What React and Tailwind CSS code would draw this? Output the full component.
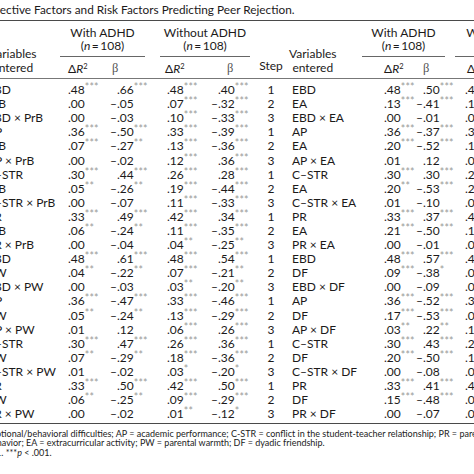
import React from "react";

const left = [
  ["1", "EBD", ".48***", ".66***", ".48***", ".40***"],
  ["2", "PrB", ".00", "–.05", ".07***", "–.32***"],
  ["3", "EBD × PrB", ".00", "–.03", ".10***", "–.33***"],
  ["1", "AP", ".36***", "–.50***", ".33***", "–.39***"],
  ["2", "PrB", ".07***", "–.27**", ".13***", "–.36***"],
  ["3", "AP × PrB", ".00", "–.02", ".12***", ".36***"],
  ["1", "C–STR", ".30***", ".44***", ".26***", ".28***"],
  ["2", "PrB", ".05**", "–.26**", ".19***", "–.44***"],
  ["3", "C–STR × PrB", ".00", "–.07", ".11***", "–.33***"],
  ["1", "PR", ".33***", ".49***", ".42***", ".34***"],
  ["2", "PrB", ".06**", "–.24**", ".11***", "–.35***"],
  ["3", "PR × PrB", ".00", "–.04", ".04**", "–.25**"],
  ["1", "EBD", ".48***", ".61***", ".48***", ".54***"],
  ["2", "PW", ".04**", "–.22**", ".07***", "–.21**"],
  ["3", "EBD × PW", ".00", "–.03", ".03**", "–.20**"],
  ["1", "AP", ".36***", "–.47***", ".33***", "–.46***"],
  ["2", "PW", ".05**", "–.24**", ".13***", "–.29***"],
  ["3", "AP × PW", ".01", ".12", ".06***", ".26***"],
  ["1", "C–STR", ".30***", ".47***", ".26***", ".36***"],
  ["2", "PW", ".07**", "–.29**", ".18***", "–.36***"],
  ["3", "C–STR × PW", ".01", "–.02", ".03*", "–.20*"],
  ["1", "PR", ".33***", ".50***", ".42***", ".50***"],
  ["2", "PW", ".06**", "–.25**", ".09***", "–.29***"],
  ["3", "PR × PW", ".00", "–.02", ".01**", "–.12*"],
];

const right = [
  ["1", "EBD", ".48***", ".50***", ".48***", ".42***"],
  ["2", "EA", ".13***", "–.41***", ".11***", "–.36***"],
  ["3", "EBD × EA", ".00", "–.01", ".08***", "–.30***"],
  ["1", "AP", ".36***", "–.37***", ".33***", "–.40***"],
  ["2", "EA", ".20***", "–.52***", ".16***", "–.45***"],
  ["3", "AP × EA", ".01", ".12", ".06***", ".27***"],
  ["1", "C–STR", ".30***", ".30***", ".26***", ".31***"],
  ["2", "EA", ".20**", "–.53***", ".22***", "–.48***"],
  ["3", "C–STR × EA", ".01", "–.10", ".05**", "–.22**"],
  ["1", "PR", ".33***", ".37***", ".42***", ".39***"],
  ["2", "EA", ".21***", "–.50***", ".14***", "–.39***"],
  ["3", "PR × EA", ".00", "–.01", ".04**", "–.21**"],
  ["1", "EBD", ".48***", ".57***", ".48***", ".55***"],
  ["2", "DF", ".09***", "–.38*", ".08***", "–.29***"],
  ["3", "EBD × DF", ".00", "–.09", ".07***", "–.27***"],
  ["1", "AP", ".36***", "–.52***", ".33***", "–.47***"],
  ["2", "DF", ".17***", "–.53***", ".08***", "–.30***"],
  ["3", "AP × DF", ".03**", ".22**", ".14***", ".38***"],
  ["1", "C–STR", ".30***", ".43***", ".26***", ".39***"],
  ["2", "DF", ".20***", "–.50***", ".13***", "–.37***"],
  ["3", "C–STR × DF", ".00", "–.08", ".08***", "–.28***"],
  ["1", "PR", ".33***", ".41***", ".42***", ".48***"],
  ["2", "DF", ".15***", "–.48***", ".06***", "–.25***"],
  ["3", "PR × DF", ".00", "–.07", ".05***", "–.23***"],
];

// splits ".48***" into minus, number and stars
function Val({ v, slot }) {
  const m = v.match(/^(–?)([^*]+)(\**)$/);
  const minus = m[1];
  const num = m[2];
  const stars = m[3];
  return (
    <span className="inline-flex items-baseline whitespace-nowrap">
      {slot && <span className={`${slot} inline-block text-right`}>{minus}</span>}
      {!slot && minus}
      <span>{num}</span>
      {stars && <span className="relative -top-[3px] text-[10.5px] text-[#9a9a9a] tracking-[0.2px]">{stars}</span>}
    </span>
  );
}

const cols = "grid grid-cols-[28px_72px_45px_50px_50px_50px_32px_75px_43px_50px_50px_55px]";

function DR2() {
  return (
    <span>
      Δ<span className="italic">R</span>
      <span className="relative -top-[4px] text-[7.5px]">2</span>
    </span>
  );
}

function Beta() {
  return <span className="font-['Liberation_Serif',serif] text-[12.5px] text-[#555]">β</span>;
}

function Group({ label, className }) {
  return (
    <div className={`col-span-2 flex flex-col items-center border-b border-[#666] pb-[4px] leading-[13px] ${className}`}>
      <span>{label}</span>
      <span>
        (<span className="italic">n</span>{"\u2009=\u2009"}108)
      </span>
    </div>
  );
}

function VarHead({ className }) {
  return (
    <div className={`row-span-2 self-end pb-[3px] ${className}`}>
      <div className="inline-flex flex-col items-center leading-[14px]">
        <span>Variables</span>
        <span>entered</span>
      </div>
    </div>
  );
}

export default function App() {
  return (
    <div className="w-[474px] h-[474px] overflow-hidden bg-white text-[#1c1a1a] font-['Lato','Open_Sans',sans-serif] text-[12px]">
      <div className="ml-[-40px] w-[620px]">
        <div className="h-[20px] flex items-center whitespace-nowrap pl-[18px] text-[11.8px]">
          Protective Factors and Risk Factors Predicting Peer Rejection.
        </div>

        <div className="border-t-[1.5px] border-[#4a4a4a]"></div>

        <div className={`${cols} pt-[5px] border-b border-[#777]`}>
          <div className="row-span-2 self-end pb-[3px] text-center">Step</div>
          <VarHead className="pl-[1px]" />
          <Group label="With ADHD" className="mr-[10px]" />
          <Group label="Without ADHD" className="mx-[5px]" />
          <div className="row-span-2 self-end pb-[3px] text-center">Step</div>
          <VarHead className="pl-[2px]" />
          <Group label="With ADHD" className="mr-[10px]" />
          <Group label="Without ADHD" className="ml-[0px]" />

          <div className="h-[21px] flex items-center pt-[2px] pl-[8px]"><DR2 /></div>
          <div className="h-[21px] flex items-center pt-[2px] pl-[7px]"><Beta /></div>
          <div className="h-[21px] flex items-center pt-[2px] pl-[10px]"><DR2 /></div>
          <div className="h-[21px] flex items-center pt-[2px] pl-[22px]"><Beta /></div>
          <div className="h-[21px] flex items-center pt-[2px] pl-[22px]"><DR2 /></div>
          <div className="h-[21px] flex items-center pt-[2px] pl-[18px]"><Beta /></div>
          <div className="h-[21px] flex items-center pt-[2px] pl-[12px]"><DR2 /></div>
          <div className="h-[21px] flex items-center pt-[2px] pl-[22px]"><Beta /></div>
        </div>

        <div className="pt-[4px] pb-[1.5px] border-b-[1.5px] border-[#4a4a4a]">
          {left.map((l, i) => {
            const r = right[i];
            return (
              <div key={i} className={`${cols} h-[14.1px] items-center leading-none whitespace-nowrap`}>
                <div className="text-center">{l[0]}</div>
                <div className="ml-[-1px]">{l[1]}</div>
                <div className="pl-[8px]"><Val v={l[2]} /></div>
                <div className="pl-[5px]"><Val v={l[3]} slot="w-[7px]" /></div>
                <div className="pl-[12px]"><Val v={l[4]} /></div>
                <div className="pl-[6px]"><Val v={l[5]} slot="w-[7px]" /></div>
                <div className="text-center">{r[0]}</div>
                <div className="pl-[5px]">{r[1]}</div>
                <div className="pl-[22px]"><Val v={r[2]} /></div>
                <div className="pl-[10px]"><Val v={r[3]} slot="w-[8px]" /></div>
                <div className="pl-[10px]"><Val v={r[4]} /></div>
                <div className="pl-[8px]"><Val v={r[5]} slot="w-[7px]" /></div>
              </div>
            );
          })}
        </div>

        <div className="pt-[5px] text-[9px] leading-[9.5px] whitespace-nowrap text-[#222]">
          <p className="ml-[-28px]">
            Note. EBD = emotional/behavioral difficulties; AP = academic performance; C-STR = conflict in the student-teacher relationship; PR = parent reports.
          </p>
          <p className="ml-[-32px]">
            PrB = problem behavior; EA = extracurricular activity; PW = parental warmth; DF = dyadic friendship.
          </p>
          <p className="ml-[-29px]">
            *<span className="italic">p</span> &lt; .05. **<span className="italic">p</span> &lt; .01. ***<span className="italic">p</span> &lt; .001.
          </p>
        </div>
      </div>
    </div>
  );
}
